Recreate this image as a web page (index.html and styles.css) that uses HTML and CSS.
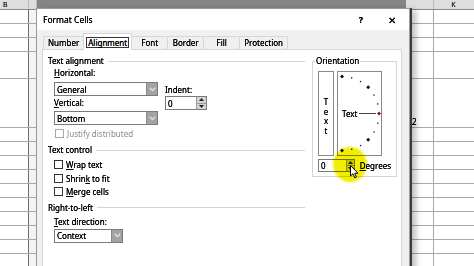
FILE: index.html
```html
<!DOCTYPE html>
<html lang="en">
<head>
  <meta charset="UTF-8" />
  <title>Format Cells</title>
  <link rel="stylesheet" href="styles.css">
</head>
<body>
  <table class="sheet">
    <colgroup><col class="col-a"><col class="col-gap"><col class="col-b"><col class="col-c"><col class="col-d"></colgroup>
    <tr class="hdr"><th class="first">B</th><th></th><th class="shade"></th><th></th><th>K</th></tr>
    <tr><td></td><td></td><td></td><td></td><td></td></tr>
    <tr><td></td><td></td><td></td><td></td><td></td></tr>
    <tr><td></td><td></td><td></td><td></td><td></td></tr>
    <tr class="r27"><td></td><td></td><td></td><td></td><td></td></tr>
    <tr class="r49"><td></td><td></td><td></td><td class="num">12</td><td></td></tr>
    <tr><td></td><td></td><td></td><td></td><td></td></tr>
    <tr><td></td><td></td><td></td><td></td><td></td></tr>
    <tr><td></td><td></td><td></td><td></td><td></td></tr>
    <tr><td></td><td></td><td></td><td></td><td></td></tr>
    <tr><td></td><td></td><td></td><td></td><td></td></tr>
    <tr><td></td><td></td><td></td><td></td><td></td></tr>
    <tr><td></td><td></td><td></td><td></td><td></td></tr>
    <tr><td></td><td></td><td></td><td></td><td></td></tr>
    <tr><td></td><td></td><td></td><td></td><td></td></tr>
    <tr><td></td><td></td><td></td><td></td><td></td></tr>
  </table>

  <div class="dialog">
    <div class="titlebar">
      <span class="title">Format Cells</span>
      <span class="help">?</span>
      <span class="close">✕</span>
    </div>

    <div class="dlg-body">
      <div class="tabs">
        <div class="tab">Number</div>
        <div class="tab active"><span class="focus">Alignment</span></div>
        <div class="tab">Font</div>
        <div class="tab">Border</div>
        <div class="tab">Fill</div>
        <div class="tab">Protection</div>
      </div>

      <div class="panel">
        <div class="left">
          <div class="group-title">Text alignment</div>
          <div class="align-grid">
            <div class="align-col">
              <div class="lbl"><u>H</u>orizontal:</div>
              <div class="select wide first-sel">
                <span>General</span>
                <span class="drop"><svg width="7" height="5" viewBox="0 0 7 5"><path d="M0.8 0.8 L3.5 3.6 L6.2 0.8" fill="none" stroke="#e4e4e4" stroke-width="1.3"/></svg></span>
              </div>
              <div class="lbl gap1"><u>V</u>ertical:</div>
              <div class="select wide gap2">
                <span>Bottom</span>
                <span class="drop"><svg width="7" height="5" viewBox="0 0 7 5"><path d="M0.8 0.8 L3.5 3.6 L6.2 0.8" fill="none" stroke="#e4e4e4" stroke-width="1.3"/></svg></span>
              </div>
              <div class="check disabled gap2"><span class="box"></span>Justify distributed</div>
            </div>
            <div class="indent-col">
              <div class="lbl">Indent:</div>
              <div class="spin indent">
                <span>0</span>
                <span class="spin-btn">
                  <span class="half"><svg width="5" height="3" viewBox="0 0 5 3"><path d="M0 3 L2.5 0 L5 3 Z" fill="#222"/></svg></span>
                  <span class="half"><svg width="5" height="3" viewBox="0 0 5 3"><path d="M0 0 L2.5 3 L5 0 Z" fill="#222"/></svg></span>
                </span>
              </div>
            </div>
          </div>

          <div class="group-title gap5">Text control</div>
          <div class="checks">
            <div class="check"><span class="box"></span><span><u>W</u>rap text</span></div>
            <div class="check"><span class="box"></span><span>Shrin<u>k</u> to fit</span></div>
            <div class="check"><span class="box"></span><span><u>M</u>erge cells</span></div>
          </div>

          <div class="group-title gap3">Right-to-left</div>
          <div class="block">
            <div class="lbl gap2"><u>T</u>ext direction:</div>
            <div class="select narrow gap1">
              <span>Context</span>
              <span class="drop"><svg width="7" height="5" viewBox="0 0 7 5"><path d="M0.8 0.8 L3.5 3.6 L6.2 0.8" fill="none" stroke="#e4e4e4" stroke-width="1.3"/></svg></span>
            </div>
          </div>
        </div>

        <fieldset class="orient">
          <legend>Orientation</legend>
          <div class="dials">
            <div class="vtext"><span>T</span><span>e</span><span>x</span><span>t</span></div>
            <div class="arc">
              <svg width="43" height="83" viewBox="0 0 43 83">
                <g fill="#111">
                  <rect x="2.6" y="3.1" width="2.8" height="2.8" transform="rotate(45 4 4.5)"/>
                  <rect x="13" y="5.2" width="1.3" height="1.3"/>
                  <rect x="21.9" y="8.9" width="1.3" height="1.3"/>
                  <rect x="28.8" y="13.9" width="2.8" height="2.8" transform="rotate(45 30.2 15.3)"/>
                  <rect x="35.4" y="22.4" width="1.3" height="1.3"/>
                  <rect x="39.1" y="31.3" width="1.3" height="1.3"/>
                  <rect x="39.1" y="50.5" width="1.3" height="1.3"/>
                  <rect x="35.4" y="59.4" width="1.3" height="1.3"/>
                  <rect x="28.8" y="66.3" width="2.8" height="2.8" transform="rotate(45 30.2 67.7)"/>
                  <rect x="21.9" y="72.9" width="1.3" height="1.3"/>
                  <rect x="13" y="76.6" width="1.3" height="1.3"/>
                  <rect x="2.6" y="77.1" width="2.8" height="2.8" transform="rotate(45 4 78.5)"/>
                </g>
                <text x="4" y="44.5" font-family="Noto Sans, sans-serif" font-size="8" fill="#000">Text</text>
                <line x1="21" y1="41.5" x2="38" y2="41.5" stroke="#444" stroke-width="1"/>
                <rect x="39.6" y="40.1" width="2.8" height="2.8" fill="#8b1a1a" transform="rotate(45 41 41.5)"/>
              </svg>
            </div>
          </div>
          <div class="deg-row">
            <div class="spin deg">
              <span>0</span>
              <span class="spin-btn">
                <span class="half"><svg width="5" height="3" viewBox="0 0 5 3"><path d="M0 3 L2.5 0 L5 3 Z" fill="#222"/></svg></span>
                <span class="half"><svg width="5" height="3" viewBox="0 0 5 3"><path d="M0 0 L2.5 3 L5 0 Z" fill="#222"/></svg></span>
              </span>
            </div>
            <span class="deg-label"><u>D</u>egrees</span>
            <span class="highlight"></span>
            <svg class="cursor" width="9" height="14" viewBox="0 0 9 14">
              <path d="M0.5 0.5 L0.5 11 L3 8.7 L4.8 12.8 L6.4 12.1 L4.7 8.2 L8 8.2 Z" fill="#fff" stroke="#000" stroke-width="1"/>
            </svg>
          </div>
        </fieldset>
      </div>
    </div>
  </div>
</body>
</html>
```

FILE: styles.css
```css
body {
  margin: 0;
  width: 474px;
  height: 266px;
  overflow: hidden;
  position: relative;
  background-color: #fff;
  font-family: 'Noto Sans', 'Liberation Sans', sans-serif;
  font-size: 8px;
  color: #000;
  text-shadow: 0 0 0.4px #000;
}

/* spreadsheet behind the dialog */
.sheet {
  border-collapse: collapse;
  table-layout: fixed;
  width: 474px;
}

.col-a { width: 28px; }
.col-gap { width: 8px; }
.col-b { width: 369px; }
.col-c { width: 28px; }
.col-d { width: 41px; }

.sheet th {
  height: 9px;
  padding: 0;
  background-color: #dedede;
  border-right: 1px solid #bdbdbd;
  border-bottom: 1px solid #8a8a8a;
  font-weight: normal;
  font-size: 7px;
  line-height: 9px;
  color: #444;
}

.sheet th.first {
  text-align: left;
  padding-left: 3px;
}

.sheet th.shade {
  background-color: #858585;
  border-right-color: #858585;
}

.sheet td {
  height: 13px;
  padding: 0;
  border-right: 1px solid #a9a9a9;
  border-bottom: 1px solid #a9a9a9;
}

.sheet td:first-child {
  border-right-color: #6e6e6e;
}

.sheet td:nth-child(2) {
  border-right-color: transparent;
  background-color: #f4f4f4;
}

.sheet .r27 td { height: 26px; }
.sheet .r49 td { height: 48px; }

.sheet td.num {
  vertical-align: bottom;
  padding-left: 2px;
  font-size: 8px;
  color: #000;
}

/* dialog */
.dialog {
  position: absolute;
  left: 36px;
  top: 8px;
  width: 374px;
  height: 262px;
  box-sizing: border-box;
  border: 1px solid #9a9a9a;
  background-color: #f0f0f0;
  box-shadow: 2px 0 0 #3c3c3c, 6px 2px 6px rgba(0,0,0,0.25);
  display: flex;
  flex-direction: column;
}

.titlebar {
  height: 21px;
  background-color: #fff;
  display: flex;
  align-items: center;
  padding-left: 6px;
  font-size: 8.5px;
}

.help {
  margin-left: auto;
  margin-right: 25px;
  font-size: 9px;
  font-weight: bold;
}

.close {
  margin-right: 13px;
  font-size: 10px;
}

.dlg-body {
  flex: 1;
  display: flex;
  flex-direction: column;
  padding: 0 7px 0 5px;
}

.tabs {
  height: 19px;
  display: flex;
  align-items: flex-end;
  padding-left: 1px;
}

.tab {
  height: 13px;
  min-width: 37px;
  box-sizing: border-box;
  padding: 0 4px;
  border: 1px solid #d6d6d6;
  border-bottom: none;
  margin-right: -1px;
  background-color: #f0f0f0;
  line-height: 12px;
  text-align: center;
}

.tab.active {
  height: 17px;
  margin-bottom: -1px;
  background-color: #fff;
  position: relative;
  z-index: 1;
  padding: 3px 2px 0;
}

.focus {
  display: inline-block;
  border: 1px solid #333;
  padding: 0 1px;
  line-height: 9px;
}

.panel {
  flex: 1;
  display: flex;
  gap: 7px;
  padding: 5px 4px 0 5px;
  background-color: #fff;
  border: 1px solid #d6d6d6;
}

.left {
  width: 257px;
}

.group-title {
  height: 12px;
  line-height: 12px;
  display: flex;
  align-items: center;
}

.group-title::after {
  content: "";
  flex: 1;
  border-top: 1px solid #d5d5d5;
  margin-left: 4px;
}

.gap1 { margin-top: 1px; }
.gap2 { margin-top: 2px; }
.gap3 { margin-top: 3px; }
.gap5 { margin-top: 5px; }

.lbl {
  height: 12px;
  line-height: 12px;
}

.align-grid {
  display: flex;
  gap: 7px;
  padding-left: 6px;
}

.align-col {
  display: flex;
  flex-direction: column;
}

.first-sel { margin-top: 3px; }

.indent-col {
  padding-top: 17px;
}

.select {
  height: 14px;
  box-sizing: border-box;
  border: 1px solid #7a7a7a;
  display: flex;
  align-items: center;
  justify-content: space-between;
  padding-left: 2px;
  background-color: #fff;
}

.select.wide { width: 104px; }
.select.narrow { width: 69px; }

.drop {
  width: 10px;
  height: 12px;
  background-color: #a3a3a3;
  border-left: 1px solid #8a8a8a;
  display: flex;
  align-items: center;
  justify-content: center;
}

.spin {
  height: 14px;
  box-sizing: border-box;
  border: 1px solid #7a7a7a;
  display: flex;
  justify-content: space-between;
  align-items: center;
  padding-left: 2px;
  background-color: #fff;
}

.spin.indent { width: 42px; }

.spin-btn {
  width: 9px;
  height: 12px;
  display: flex;
  flex-direction: column;
  border-left: 1px solid #999;
}

.half {
  flex: 1;
  background-color: #d4d4d4;
  display: flex;
  align-items: center;
  justify-content: center;
}

.half + .half {
  border-top: 1px solid #999;
}

.check {
  height: 13.5px;
  display: flex;
  align-items: center;
  gap: 3px;
}

.check .box {
  width: 9px;
  height: 9px;
  box-sizing: border-box;
  border: 1px solid #333;
  background-color: #fff;
}

.check.disabled {
  height: 12px;
  padding-left: 1px;
  color: #8a8a8a;
  text-shadow: none;
}

.check.disabled .box {
  border-color: #a8a8a8;
}

.checks {
  margin-top: 2px;
  padding-left: 6px;
}

.block {
  padding-left: 6px;
}

/* orientation */
.orient {
  box-sizing: border-box;
  width: 85px;
  height: 122px;
  margin: 0;
  padding: 4px 5px 3px;
  border: 1px solid #d5d5d5;
  min-width: 0;
}

.orient legend {
  padding: 0 1px;
  margin-left: -3px;
  line-height: 12px;
}

.dials {
  display: flex;
  gap: 3px;
}

.vtext {
  width: 16px;
  height: 85px;
  box-sizing: border-box;
  border: 1px solid #8a8a8a;
  display: flex;
  flex-direction: column;
  align-items: center;
  justify-content: center;
  padding-top: 5px;
  line-height: 9.5px;
}

.arc {
  width: 45px;
  height: 85px;
  box-sizing: border-box;
  border: 1px solid #8a8a8a;
}

.arc svg {
  display: block;
}

.deg-row {
  margin-top: 3px;
  display: flex;
  align-items: center;
  position: relative;
}

.spin.deg {
  width: 39px;
  height: 13px;
}

.spin.deg .spin-btn {
  width: 7px;
  height: 11px;
}

.deg-label {
  margin-left: 5px;
}

.highlight {
  position: absolute;
  left: 15px;
  top: -12px;
  width: 34px;
  height: 35px;
  border-radius: 50%;
  background-color: #f2ee00;
  mix-blend-mode: multiply;
  filter: blur(1px);
}

.cursor {
  position: absolute;
  left: 32px;
  top: 6px;
}
```
